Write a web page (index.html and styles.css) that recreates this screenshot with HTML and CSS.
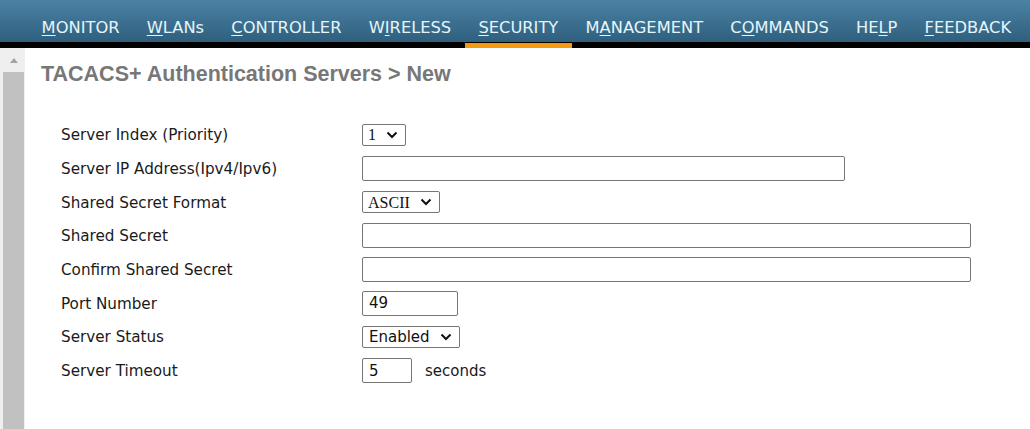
FILE: index.html
```html
<!DOCTYPE html>
<html>
<head>
<meta charset="utf-8">
<link rel="stylesheet" href="styles.css">
</head>
<body>
<header class="topbar">
  <nav class="nav">
    <a class="tab"><u>M</u>ONITOR</a>
    <a class="tab"><u>W</u>LANs</a>
    <a class="tab"><u>C</u>ONTROLLER</a>
    <a class="tab">W<u>I</u>RELESS</a>
    <a class="tab active"><u>S</u>ECURITY</a>
    <a class="tab">M<u>A</u>NAGEMENT</a>
    <a class="tab">C<u>O</u>MMANDS</a>
    <a class="tab">HE<u>L</u>P</a>
    <a class="tab"><u>F</u>EEDBACK</a>
  </nav>
</header>
<div class="main">
  <aside class="scroll">
    <div class="arrow"></div>
    <div class="thumb"></div>
  </aside>
  <section class="content">
    <h1 class="title">TACACS+ Authentication Servers &gt; New</h1>
    <div class="form">
      <div class="label">Server Index (Priority)</div>
      <div class="field"><span class="sel serif w44"><select><option>1</option></select><svg class="chev" viewBox="0 0 12 8"><path d="M1.5 1.5 L6 6 L10.5 1.5"/></svg></span></div>

      <div class="label">Server IP Address(Ipv4/Ipv6)</div>
      <div class="field"><input class="txt w483" type="text"></div>

      <div class="label">Shared Secret Format</div>
      <div class="field"><span class="sel serif w78"><select><option>ASCII</option></select><svg class="chev" viewBox="0 0 12 8"><path d="M1.5 1.5 L6 6 L10.5 1.5"/></svg></span></div>

      <div class="label">Shared Secret</div>
      <div class="field"><input class="txt w609" type="password"></div>

      <div class="label">Confirm Shared Secret</div>
      <div class="field"><input class="txt w609" type="password"></div>

      <div class="label">Port Number</div>
      <div class="field"><input class="txt w96" type="text" value="49"></div>

      <div class="label">Server Status</div>
      <div class="field"><span class="sel w98"><select><option>Enabled</option></select><svg class="chev" viewBox="0 0 12 8"><path d="M1.5 1.5 L6 6 L10.5 1.5"/></svg></span></div>

      <div class="label">Server Timeout</div>
      <div class="field"><input class="txt w50" type="text" value="5"><span class="unit">seconds</span></div>
    </div>
  </section>
</div>
</body>
</html>
```

FILE: styles.css
```css
html, body {
  margin: 0;
  padding: 0;
  background: #ffffff;
  height: 100%;
  overflow: hidden;
}
body {
  font-family: "DejaVu Sans", Verdana, sans-serif;
  color: #1a1a1a;
}
.topbar {
  height: 42px;
  background: linear-gradient(#4b82a4, #2f5f7d);
  border-bottom: 6px solid #000;
  position: relative;
}
.nav {
  display: flex;
  height: 42px;
  padding-left: 28px;
}
.tab {
  display: flex;
  align-items: center;
  height: 42px;
  padding: 12px 13.6px 0;
  font-size: 16.3px;
  color: #e6f5fb;
  white-space: nowrap;
  position: relative;
  box-sizing: border-box;
}
.tab u {
  text-decoration-thickness: 1px;
  text-underline-offset: 2px;
}
.tab.active::after {
  content: "";
  position: absolute;
  left: 0;
  right: 0;
  bottom: -6px;
  height: 5px;
  background: #f59a10;
}
.main {
  display: flex;
  height: calc(100% - 48px);
}
.scroll {
  width: 25px;
  background: #efefef;
  display: flex;
  flex-direction: column;
  align-items: flex-end;
  flex: none;
}
.arrow {
  width: 0;
  height: 0;
  border-left: 4.5px solid transparent;
  border-right: 4.5px solid transparent;
  border-bottom: 5px solid #a3a3a3;
  margin: 10px 7px 0 0;
}
.thumb {
  width: 21px;
  margin-top: 9px;
  flex: 1;
  background: #c1c1c1;
  margin-right: 1px;
}
.content {
  flex: 1;
  padding-left: 16px;
}
.title {
  margin: 14px 0 0 0;
  font-family: "Liberation Sans", Arial, sans-serif;
  font-weight: bold;
  font-size: 21.5px;
  line-height: 25px;
  color: #777777;
}
.form {
  display: grid;
  grid-template-columns: 301px 1fr;
  grid-auto-rows: 33.7px;
  align-items: center;
  margin-top: 31px;
  padding-left: 20px;
}
.label {
  font-size: 15.2px;
  color: #1a1a1a;
  padding-top: 1px;
}
.field {
  display: flex;
  align-items: center;
}
.txt {
  box-sizing: border-box;
  height: 25px;
  border: 1px solid #767676;
  border-radius: 2px;
  margin: 0;
  padding: 0 6px;
  font-family: "DejaVu Sans", Verdana, sans-serif;
  font-size: 15px;
  color: #111;
  background: #fff;
  outline: none;
}
.w483 { width: 483px; }
.w609 { width: 609px; }
.w96 { width: 96px; }
.w50 { width: 50px; }
.unit {
  margin-left: 13px;
  font-size: 15px;
}
.sel {
  position: relative;
  display: inline-block;
  height: 22px;
}
.sel select {
  -webkit-appearance: none;
  appearance: none;
  box-sizing: border-box;
  height: 22px;
  width: 100%;
  border: 1px solid #767676;
  border-radius: 2px;
  background: #fff;
  margin: 0;
  padding: 0 0 0 6px;
  font-family: "DejaVu Sans", Verdana, sans-serif;
  font-size: 15px;
  color: #111;
  outline: none;
}
.sel.serif select {
  font-family: "Liberation Serif", "Times New Roman", serif;
  font-size: 16px;
  padding-left: 5px;
}
.w44 { width: 44px; }
.w78 { width: 78px; }
.w98 { width: 98px; }
.chev {
  position: absolute;
  right: 8px;
  top: 7px;
  width: 12px;
  height: 8px;
  pointer-events: none;
}
.chev path {
  fill: none;
  stroke: #111;
  stroke-width: 2;
}
```
